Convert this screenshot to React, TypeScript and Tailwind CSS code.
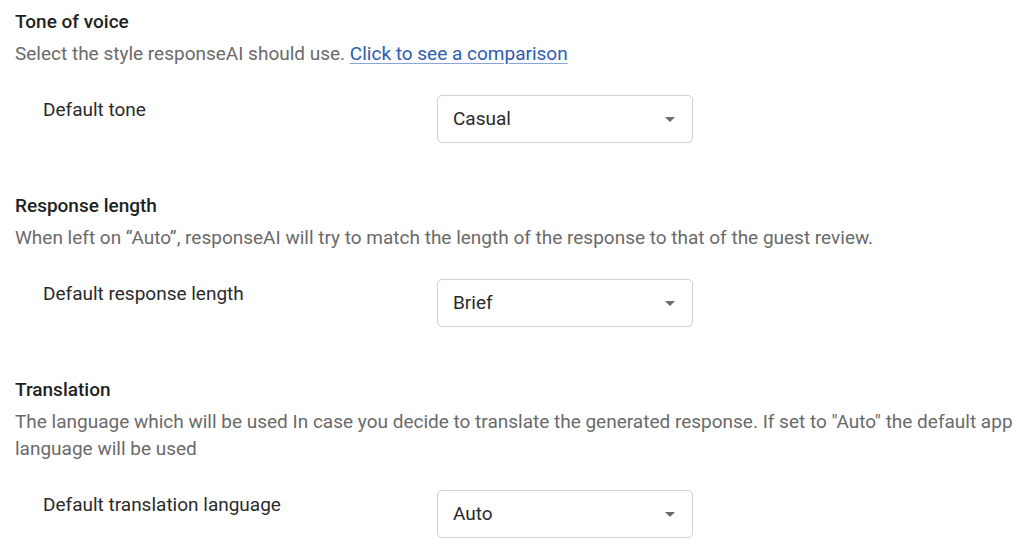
const Select = ({ value }: { value: string }) => {
  return (
    <div className="flex items-center justify-between w-[256px] h-[48px] border border-[#d0d0d0] rounded-[5px] bg-white pl-[15px] pr-[17px]">
      <span className="text-[19px] text-[#2a2a2a] pt-[1px]">{value}</span>
      <span className="w-0 h-0 border-l-[5px] border-r-[5px] border-t-[5px] border-l-transparent border-r-transparent border-t-[#6b6b6b]" />
    </div>
  );
};

const Section = ({
  title,
  children,
  label,
  value,
}: {
  title: string;
  children: React.ReactNode;
  label: string;
  value: string;
}) => {
  return (
    <section>
      <h2 className="text-[19px] leading-[27px] font-medium text-[#1f1f1f]">{title}</h2>
      <p className="mt-[5px] text-[19px] leading-[27px] text-[#6a6a6a]">{children}</p>
      <div className="flex items-start mt-[28px]">
        <div className="w-[422px] pl-[28px] pt-[1px] text-[19px] leading-[27px] text-[#2a2a2a]">{label}</div>
        <Select value={value} />
      </div>
    </section>
  );
};

export default function App() {
  return (
    <div
      className="w-[1024px] h-[544px] overflow-hidden bg-white pl-[15px] pt-[8px] flex flex-col gap-[49px]"
      style={{ fontFamily: "Roboto, 'Liberation Sans', sans-serif" }}
    >
      <Section title="Tone of voice" label="Default tone" value="Casual">
        Select the style responseAI should use.{" "}
        <a href="#" className="text-[#2d5db3] underline underline-offset-[3px] decoration-[#8aa6d8]">
          Click to see a comparison
        </a>
      </Section>
      <Section title="Response length" label="Default response length" value="Brief">
        When left on “Auto”, responseAI will try to match the length of the response to that of the guest review.
      </Section>
      <Section title="Translation" label="Default translation language" value="Auto">
        The language which will be used In case you decide to translate the generated response. If set to "Auto" the default app language will be used
      </Section>
    </div>
  );
}
